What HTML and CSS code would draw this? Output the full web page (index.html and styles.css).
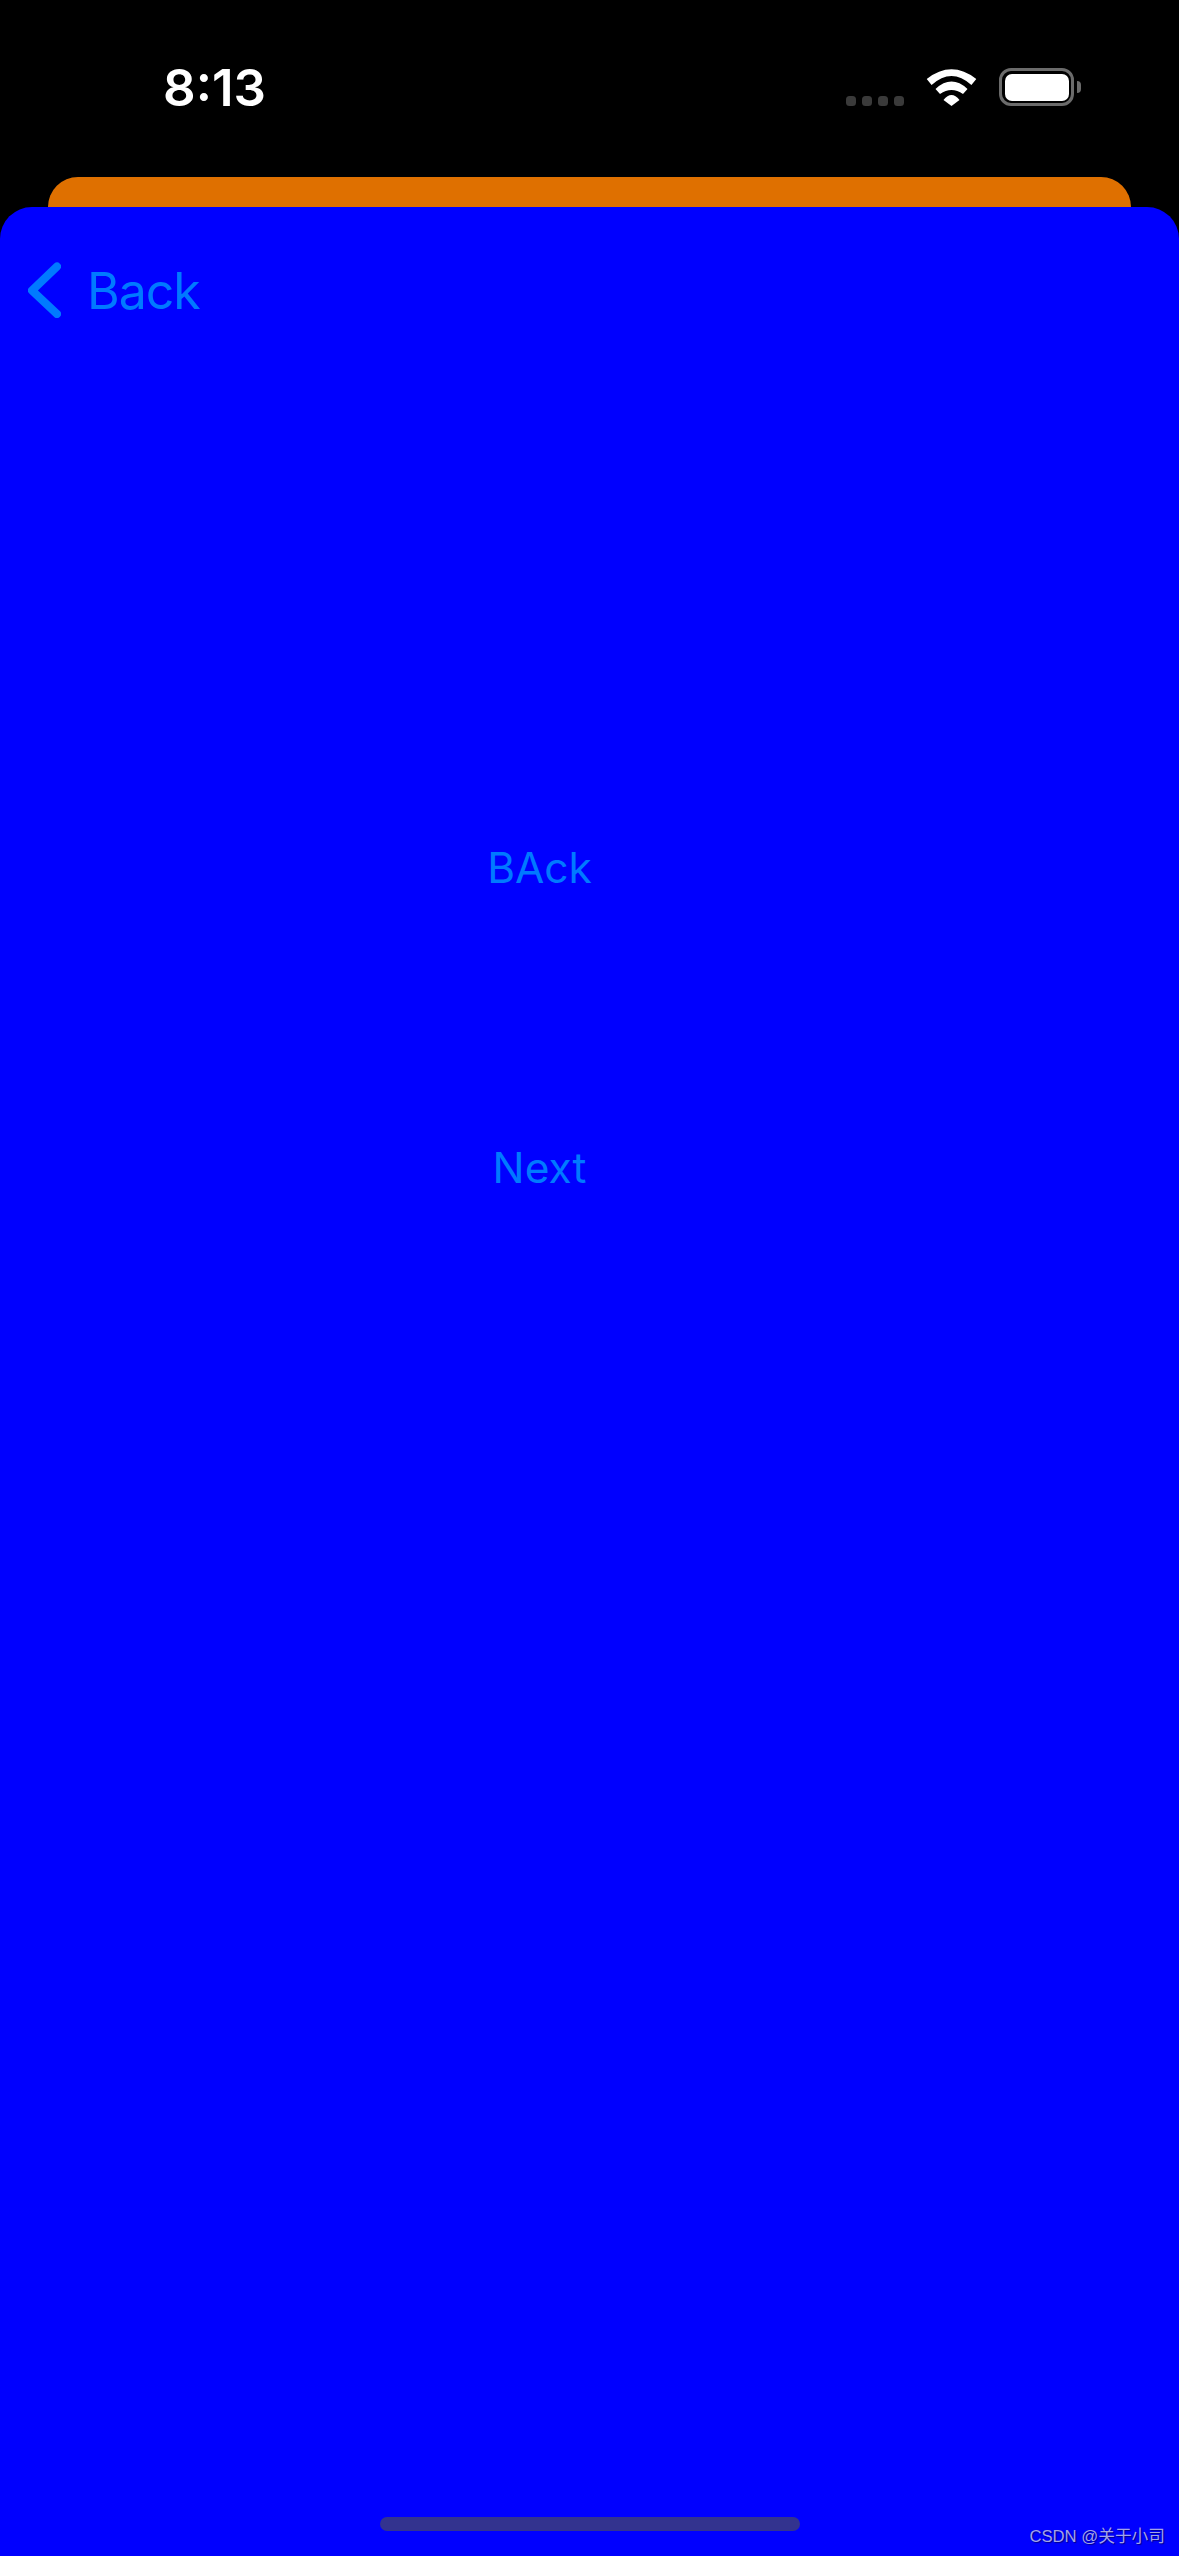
FILE: index.html
```html
<!DOCTYPE html>
<html lang="en">
<head>
<meta charset="utf-8">
<title>Back</title>
<link rel="stylesheet" href="styles.css">
</head>
<body>
<div class="screen">
  <header class="status">
    <span class="time">8:13</span>
    <div class="status-icons">
      <div class="dots"><i></i><i></i><i></i><i></i></div>
      <svg class="wifi" viewBox="0 0 51 37" aria-hidden="true">
        <path d="M.7 10Q25.5-9.4 50.3 10L45.4 16Q25.5-2 5.6 16Z"/>
        <path d="M9.5 20Q25.5 5.2 41.5 20L37 25Q25.5 17 14 25Z"/>
        <path d="M17.5 31Q25.5 21 33.5 31L25.5 37Z"/>
      </svg>
      <div class="battery"><div class="battery-body"><div class="battery-fill"></div></div><div class="battery-tip"></div></div>
    </div>
  </header>
  <div class="back-sheet"></div>
  <main class="sheet">
    <nav class="nav">
      <svg class="chevron" viewBox="0 0 33 56" aria-hidden="true"><path d="M29 4.5 4 28.5 29 52"/></svg>
      <span class="nav-label">Back</span>
    </nav>
    <div class="actions">
      <span class="action">BAck</span>
      <span class="action">Next</span>
    </div>
    <div class="home-bar"></div>
  </main>
  <div class="watermark">CSDN @关于小司</div>
</div>
</body>
</html>
```
FILE: styles.css
```css
* { box-sizing: border-box; }
html, body { margin: 0; padding: 0; background: #000; }
.screen {
  position: relative;
  width: 1179px;
  height: 2556px;
  display: flex;
  flex-direction: column;
  overflow: hidden;
  background: #000;
  font-family: Inter, "Liberation Sans", "Noto Sans CJK SC", sans-serif;
}
.status {
  height: 177px;
  flex: none;
  display: flex;
  justify-content: space-between;
  padding: 56px 98px 0 163px;
}
.time {
  color: #fff;
  font-size: 51px;
  font-weight: 600;
  line-height: 62px;
  height: 62px;
  margin-top: 1px;
}
.status-icons {
  display: flex;
  align-items: flex-end;
  height: 50px;
}
.dots { display: flex; gap: 6px; margin-right: 22px; }
.dots i { width: 10px; height: 10px; border-radius: 3.5px; background: #3a3a3a; }
.wifi { width: 51px; height: 37px; margin-right: 22px; fill: #fff; }
.battery { display: flex; align-items: center; }
.battery-body {
  width: 75px;
  height: 38px;
  border: 3.5px solid #6b6b6b;
  border-radius: 12px;
  padding: 2.5px;
}
.battery-fill { width: 100%; height: 100%; background: #fff; border-radius: 7px; }
.battery-tip {
  width: 4px;
  height: 12px;
  margin-left: 3px;
  background: #6b6b6b;
  border-radius: 0 6px 6px 0;
}
.back-sheet {
  height: 30px;
  flex: none;
  margin: 0 48px;
  background: #df7000;
  border-radius: 30px 30px 0 0;
}
.sheet {
  flex: 1;
  display: flex;
  flex-direction: column;
  background: #0000ff;
  border-radius: 32px 32px 0 0;
  color: #007aff;
}
.nav {
  display: flex;
  align-items: center;
  height: 56px;
  margin-top: 55px;
  padding-left: 28px;
}
.chevron {
  width: 33px;
  height: 56px;
  fill: none;
  stroke: #007aff;
  stroke-width: 8;
  stroke-linecap: round;
  stroke-linejoin: round;
}
.nav-label {
  margin: 2px 0 0 26px;
  font-size: 50px;
  line-height: 56px;
  letter-spacing: -1px;
}
.actions {
  display: flex;
  flex-direction: column;
  align-items: center;
  gap: 248px;
  margin-top: 524px;
  padding-right: 100px;
}
.action { font-size: 42.5px; line-height: 52px; }
.home-bar {
  width: 420px;
  height: 14px;
  margin: auto auto 25px;
  border-radius: 7px;
  background: #33338f;
}
.watermark {
  position: absolute;
  right: 14px;
  bottom: 8px;
  color: #a3a3e8;
  font-family: "Liberation Sans", "Noto Sans CJK SC", sans-serif;
  font-size: 16.7px;
  line-height: 22px;
  text-shadow: 1px 1px 1px rgba(0, 0, 60, .6);
}
```
